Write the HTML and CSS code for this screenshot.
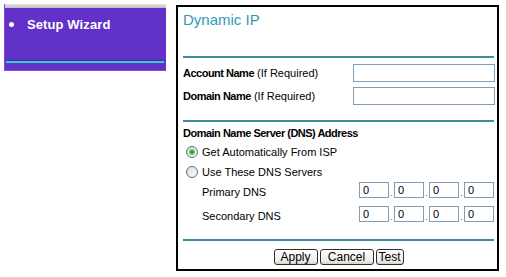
FILE: index.html
```html
<!DOCTYPE html>
<html lang="en">
<head>
    <meta charset="UTF-8">
    <title>Dynamic IP</title>
    <link rel="stylesheet" href="styles.css">
</head>
<body>
    <div class="page">
        <div class="sidebar">
            <div class="sidebar-top"></div>
            <div class="menu-item"><span class="dot"></span>Setup Wizard</div>
            <div class="sidebar-rule"></div>
        </div>

        <div class="panel">
            <h2 class="title">Dynamic IP</h2>
            <div class="rule"></div>

            <div class="block names">
                <div class="row">
                    <label><b>Account Name</b> (If Required)</label>
                    <input type="text" class="wide">
                </div>
                <div class="row">
                    <label><b>Domain Name</b> (If Required)</label>
                    <input type="text" class="wide">
                </div>
            </div>
            <div class="rule"></div>

            <div class="block dns">
                <div class="heading">Domain Name Server (DNS) Address</div>
                <div class="radio-row"><span class="radio checked"></span>Get Automatically From ISP</div>
                <div class="radio-row"><span class="radio"></span>Use These DNS Servers</div>
                <div class="ip-row">
                    <span class="ip-label">Primary DNS</span>
                    <div class="ip">
                        <input type="text" value="0"><i>.</i><input type="text" value="0"><i>.</i><input type="text" value="0"><i>.</i><input type="text" value="0">
                    </div>
                </div>
                <div class="ip-row">
                    <span class="ip-label">Secondary DNS</span>
                    <div class="ip">
                        <input type="text" value="0"><i>.</i><input type="text" value="0"><i>.</i><input type="text" value="0"><i>.</i><input type="text" value="0">
                    </div>
                </div>
            </div>
            <div class="rule"></div>

            <div class="buttons">
                <button class="btn apply">Apply</button>
                <button class="btn cancel">Cancel</button>
                <button class="btn test">Test</button>
            </div>
        </div>
    </div>
</body>
</html>
```

FILE: styles.css
```css
* {
    margin: 0;
    padding: 0;
    box-sizing: border-box;
    font-family: 'Liberation Sans', Arial, sans-serif;
}

body {
    background: #fff;
    color: #000;
    font-size: 11px;
}

.page {
    display: flex;
    align-items: flex-start;
    padding: 4px 0 0 4px;
    gap: 10px;
}

/* Sidebar */
.sidebar {
    width: 162px;
    height: 67px;
    background: #6131c9;
    border-left: 1px solid #8a3fd0;
    border-bottom: 1px solid #8a4fd6;
}

.sidebar-top {
    height: 4px;
    background: linear-gradient(#e4e4e4, #bdbdbd);
}

.menu-item {
    display: flex;
    align-items: center;
    height: 32px;
    padding-left: 4px;
    color: #fff;
    font-size: 13px;
    font-weight: bold;
    letter-spacing: 0.1px;
}

.dot {
    width: 5px;
    height: 5px;
    border-radius: 50%;
    background: #fff;
    margin-right: 13px;
}

.sidebar-rule {
    margin: 20px 2px 0 1px;
    height: 3px;
    border-top: 1px solid #4a2a8a;
    background: #33d0d4;
}

/* Main panel */
.panel {
    width: 323px;
    height: 266px;
    margin-top: 1px;
    border: 2px solid #000;
    padding: 0 3px 0 5px;
}

.title {
    height: 49px;
    padding-top: 5px;
    color: #3399b0;
    font-size: 15px;
    font-weight: normal;
    line-height: 16px;
}

.rule {
    height: 2px;
    background: #3d8d9e;
}

.names {
    padding: 6px 0 15px;
    display: flex;
    flex-direction: column;
    gap: 5px;
}

.row {
    display: flex;
    align-items: center;
    justify-content: space-between;
    height: 18px;
}

b {
    letter-spacing: -0.5px;
}

input {
    border: 1px solid #7f9db9;
    background: #fff;
    font-size: 11px;
    padding: 0 3px;
    outline: none;
}

.wide {
    width: 142px;
    height: 18px;
    margin-right: -1px;
}

.dns {
    padding-top: 2px;
}

.heading {
    height: 18px;
    line-height: 18px;
    font-weight: bold;
    letter-spacing: -0.5px;
}

.radio-row {
    display: flex;
    align-items: center;
    height: 20px;
    padding-left: 3px;
}

.radio {
    width: 12px;
    height: 12px;
    border-radius: 50%;
    border: 1px solid #52708e;
    background: linear-gradient(135deg, #dcdcd4, #fff);
    margin-right: 4px;
    display: flex;
    align-items: center;
    justify-content: center;
}

.radio.checked::after {
    content: '';
    width: 4px;
    height: 4px;
    border-radius: 50%;
    background: #2bab2b;
    box-shadow: 0 0 1px 1px #6cd06c;
}

.ip-row {
    display: flex;
    align-items: center;
    justify-content: space-between;
    height: 16px;
    margin-bottom: 8px;
}

.ip-row:last-child {
    margin-bottom: 17px;
}

.ip-label {
    padding-left: 19px;
    padding-top: 4px;
}

.ip {
    display: flex;
    align-items: flex-end;
}

.ip input {
    width: 30px;
    height: 16px;
}

.ip i {
    font-style: normal;
    width: 5px;
    font-size: 9px;
    line-height: 9px;
    color: #666;
    text-align: center;
}

/* Buttons */
.buttons {
    display: flex;
    justify-content: center;
    gap: 2px;
    margin-top: 8px;
}

.btn {
    height: 16px;
    font-size: 12px;
    line-height: 14px;
    background: linear-gradient(#fff, #ecebe6 80%, #d6d0c5);
    border: 1px solid #2e2e2e;
    border-radius: 3px;
    color: #000;
}

.apply { width: 44px; }
.cancel { width: 54px; }
.test { width: 28px; }
```
